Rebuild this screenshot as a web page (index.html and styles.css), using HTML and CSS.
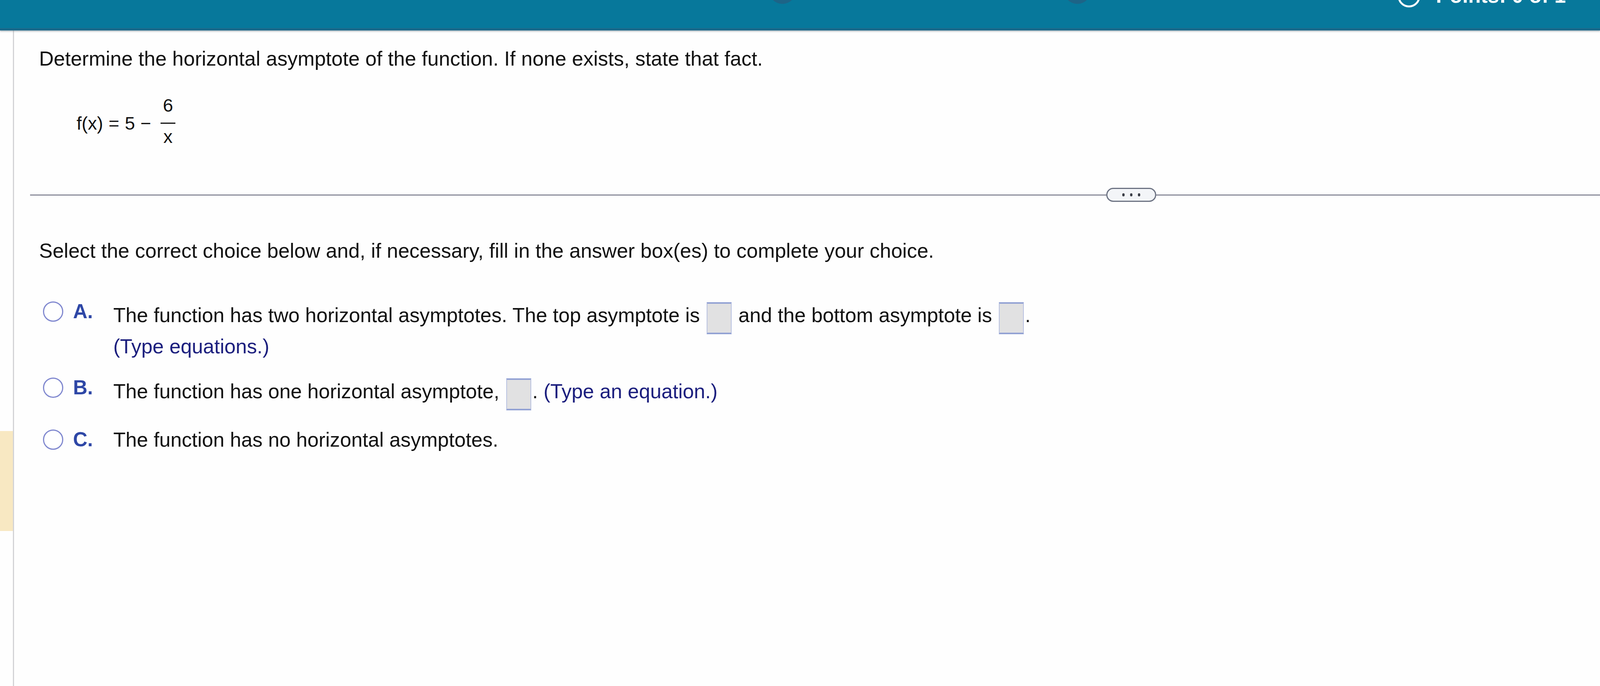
FILE: index.html
```html
<!DOCTYPE html>
<html lang="en">
<head>
<meta charset="utf-8">
<title>Horizontal asymptote</title>
<link rel="stylesheet" href="styles.css">
</head>
<body>
<header class="topbar">
  <span class="nav-dot nav-dot-first"></span>
  <span class="nav-dot nav-dot-second"></span>
  <span class="points-ring"></span>
  <span class="points-text">Points: 0 of 1</span>
</header>
<div class="page">
  <aside class="sidebar">
    <div class="sidebar-mark"></div>
  </aside>
  <main class="content">
    <p class="question">Determine the horizontal asymptote of the function. If none exists, state that fact.</p>
    <div class="formula">
      <span class="formula-lhs">f(x) = 5 −</span>
      <span class="fraction">
        <span class="num">6</span>
        <span class="bar"></span>
        <span class="den">x</span>
      </span>
    </div>
    <div class="divider">
      <span class="divider-line divider-left"></span>
      <span class="more-pill"><i></i><i></i><i></i></span>
      <span class="divider-line divider-right"></span>
    </div>
    <p class="instruction">Select the correct choice below and, if necessary, fill in the answer box(es) to complete your choice.</p>
    <div class="choices">
      <div class="choice">
        <div class="choice-key"><span class="radio"></span><span class="letter">A.</span></div>
        <div class="choice-text">
          <div>The function has two horizontal asymptotes. The top asymptote is <span class="answer-box"></span> and the bottom asymptote is <span class="answer-box"></span>.</div>
          <div class="hint">(Type equations.)</div>
        </div>
      </div>
      <div class="choice">
        <div class="choice-key"><span class="radio"></span><span class="letter">B.</span></div>
        <div class="choice-text">
          <div>The function has one horizontal asymptote, <span class="answer-box"></span>. <span class="hint">(Type an equation.)</span></div>
        </div>
      </div>
      <div class="choice">
        <div class="choice-key"><span class="radio"></span><span class="letter">C.</span></div>
        <div class="choice-text">
          <div>The function has no horizontal asymptotes.</div>
        </div>
      </div>
    </div>
  </main>
</div>
</body>
</html>
```
FILE: styles.css
```css
* { box-sizing: border-box; }
html, body {
  margin: 0;
  padding: 0;
  background: #fefefe;
}
body {
  font-family: "Liberation Sans", Arial, sans-serif;
  color: #111;
  min-height: 100vh;
  overflow-x: hidden;
}

/* Header bar (only its lower part is visible) */
.topbar {
  height: 78px;
  background: #07789b;
  border-bottom: 6px solid #19698b;
  box-shadow: 0 3px 3px rgba(120, 130, 140, 0.45);
  display: flex;
  align-items: flex-start;
  overflow: hidden;
  position: relative;
  z-index: 2;
}
.nav-dot {
  flex: none;
  width: 70px;
  height: 70px;
  border-radius: 50%;
  background: #1d6487;
  margin-top: -60px;
}
.nav-dot-first { margin-left: 1968px; }
.nav-dot-second { margin-left: 685px; }
.points-ring {
  flex: none;
  width: 58px;
  height: 58px;
  border: 5px solid #fff;
  border-radius: 50%;
  margin-top: -39px;
  margin-left: 785px;
}
.points-text {
  flex: none;
  color: #fff;
  font-weight: bold;
  font-size: 53px;
  line-height: 53px;
  margin-top: -38px;
  margin-left: 40px;
  white-space: nowrap;
}

/* Page body */
.page {
  display: flex;
  min-height: 1679px;
}
.sidebar {
  flex: none;
  width: 36px;
  border-right: 3px solid #d3d3d6;
}
.sidebar-mark {
  margin-top: 1026px;
  height: 256px;
  background: #f8e8c2;
}
.content {
  flex: 1;
  min-width: 0;
  padding: 41px 0 0 41px;
}
.question, .instruction {
  margin: 0 0 0 23px;
  font-size: 52px;
  line-height: 62px;
  white-space: nowrap;
}

/* Formula */
.formula {
  display: flex;
  align-items: flex-start;
  margin: 66px 0 0 119px;
  font-size: 47px;
  line-height: 46px;
}
.formula-lhs {
  margin-top: 46px;
  white-space: pre;
  word-spacing: 1px;
}
.fraction {
  display: flex;
  flex-direction: column;
  align-items: center;
  width: 38px;
  margin-left: 24px;
}
.num { padding-bottom: 21px; }
.bar {
  width: 38px;
  height: 3px;
  background: #111;
}
.den { padding-top: 10px; }

/* Divider with "more" pill */
.divider {
  display: flex;
  align-items: center;
  height: 36px;
  margin-top: 108px;
}
.divider-line {
  height: 3px;
  background: #8b8d9b;
}
.divider-left { flex: 0 0 2755px; }
.divider-right { flex: 1; }
.more-pill {
  flex: none;
  width: 128px;
  height: 36px;
  border: 3px solid #6c7282;
  border-radius: 18px;
  background: #f3f5f8;
  display: flex;
  align-items: center;
  justify-content: center;
  gap: 14px;
}
.more-pill i {
  display: block;
  width: 6px;
  height: 8px;
  border-radius: 3px;
  background: #3c3f48;
}

.instruction { margin-top: 94px; }

/* Choices */
.choices {
  margin: 94px 0 0 33px;
  display: flex;
  flex-direction: column;
  gap: 44px;
}
.choice {
  display: flex;
  align-items: flex-start;
}
.choice-key {
  flex: none;
  display: flex;
  align-items: center;
  height: 62px;
  width: 180px;
}
.radio {
  flex: none;
  width: 52px;
  height: 52px;
  border: 3px solid #8088cf;
  border-radius: 50%;
  background: #fff;
  margin-right: 25px;
}
.letter {
  color: #2e47a6;
  font-weight: bold;
  font-size: 51px;
  line-height: 62px;
}
.choice-text {
  font-size: 51.7px;
  line-height: 62px;
  white-space: nowrap;
}
.hint { color: #1c1f7e; }
.answer-box {
  display: inline-block;
  width: 64px;
  height: 82px;
  vertical-align: middle;
  margin: 7px 3px 0;
  background: #e1e1e2;
  border: 2px solid #b8c1e0;
  border-top: 4px solid #93a2d4;
  border-bottom: 4px solid #93a2d4;
}
```
